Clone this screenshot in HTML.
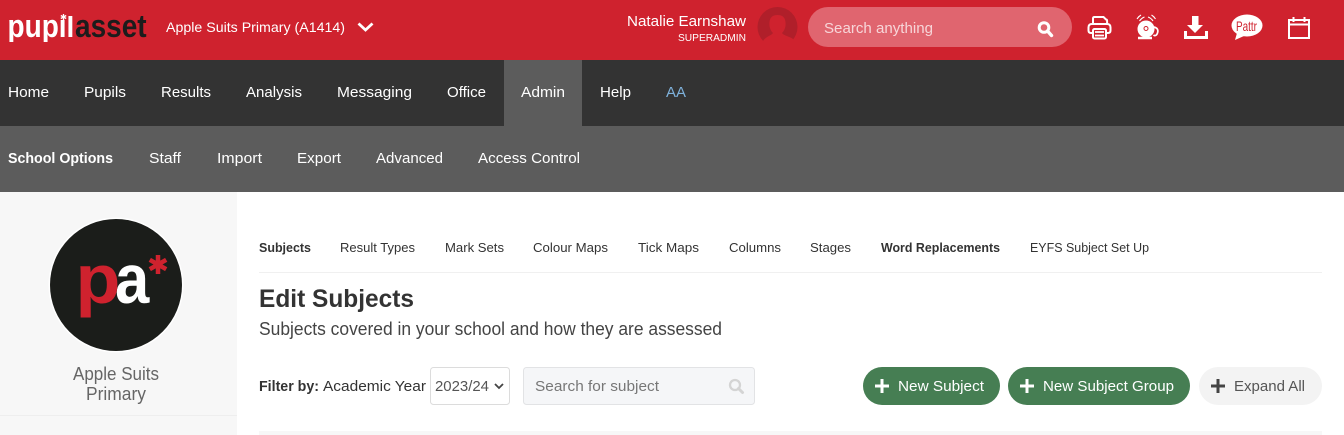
<!DOCTYPE html>
<html lang="en">
<head>
<meta charset="utf-8">
<title>Edit Subjects</title>
<style>
html,body{margin:0;padding:0;width:1344px;height:435px;overflow:hidden;background:#fff}
svg{display:block}
text{font-family:"Liberation Sans",sans-serif}
.n{font-size:15px;fill:#fff}
.t{font-size:12.5px;fill:#333}
.b{font-weight:bold}
</style>
</head>
<body>
<svg width="1344" height="435" viewBox="0 0 1344 435" xmlns="http://www.w3.org/2000/svg">
<defs>
<clipPath id="lg"><rect x="0" y="16" width="160" height="26"/></clipPath>
</defs>
<rect width="1344" height="435" fill="#fff"/>
<!-- header -->
<rect width="1344" height="60" fill="#cf222e"/>
<g clip-path="url(#lg)">
<text transform="translate(7.500 37) scale(1 1.150)" font-size="28" font-weight="bold" fill="#fff">pupil</text>
<text transform="translate(75 37) scale(1 1.150)" font-size="28" font-weight="bold" fill="#1c1c1c">asset</text>
</g>
<rect x="59" y="13" width="9" height="6.500" fill="#cf222e"/>
<path d="M63.500 14v6M60.800 15.500l5.400 3M66.200 15.500l-5.400 3" stroke="#fff" stroke-width="1.300"/>
<text x="166" y="32" font-size="14" fill="#fff" textLength="179" lengthAdjust="spacingAndGlyphs">Apple Suits Primary (A1414)</text>
<path d="M358.500 23.500l7 6.500 7-6.500" fill="none" stroke="#fff" stroke-width="2.800"/>
<text x="627" y="26" font-size="14.500" fill="#fff" textLength="119" lengthAdjust="spacingAndGlyphs">Natalie Earnshaw</text>
<text x="678" y="41" font-size="10.500" fill="#fff" textLength="68" lengthAdjust="spacingAndGlyphs">SUPERADMIN</text>
<!-- avatar -->
<circle cx="777.500" cy="27" r="20" fill="#b01f2a"/>
<path d="M763 41C766 36 771 36 773 33C770 30 769 26 769.500 22C770 17 773 15 777.500 15C782 15 785 17 785.500 22C786 26 785 30 782 33C784 36 789 36 793 39L793 48L763 48z" fill="#cf222e"/>
<!-- search -->
<rect x="808" y="7" width="264" height="40" rx="20" fill="#e0656f"/>
<text x="824" y="33" font-size="15" fill="#f7d5d8" textLength="109" lengthAdjust="spacingAndGlyphs">Search anything</text>
<circle cx="1044" cy="27.500" r="4.800" fill="none" stroke="#fff" stroke-width="3"/>
<path d="M1047.500 31l4 4.500" stroke="#fff" stroke-width="3.400" stroke-linecap="round"/>
<!-- printer -->
<g fill="none" stroke="#fff" stroke-width="2">
<path d="M1093 25v-6.500q0-1.500 1.500-1.500h9l2.500 2.500h.1q1 0 1 1.500v4"/>
<path d="M1093 33h-2q-2.500 0-2.500-2.500v-3q0-3.500 3.500-3.500h15q3.500 0 3.500 3.500v3q0 2.500-2.500 2.500h-2"/>
<rect x="1093" y="29" width="13" height="9.500" rx="1.500"/>
<path d="M1095 32h9M1095 35.500h9" stroke-width="1.700"/>
</g>
<!-- bell -->
<g fill="none" stroke="#fff">
<path d="M1139.500 21q2-3 5-4M1153 21q-2-3-5-4M1137 19q1.500-2.500 4-4M1155.500 19q-1.500-2.500-4-4" stroke-width="1.100"/>
<circle cx="1146" cy="29" r="8.500" fill="#fff" stroke="none"/>
<circle cx="1146" cy="28.500" r="2" stroke="#cf222e" stroke-width="1"/>
<path d="M1154 27c3.500 1 4.500 3 3.500 6s-3 3-4 2" stroke-width="1.700"/>
<path d="M1138 38h14" stroke-width="2.500"/>
</g>
<!-- download -->
<path d="M1192 16h6.500v9h4.500l-8 8-8-8h5z" fill="#fff"/>
<path d="M1185.500 31v6.500h21v-6.500" fill="none" stroke="#fff" stroke-width="3"/>
<!-- pattr -->
<ellipse cx="1247" cy="25.500" rx="15.500" ry="11" fill="#fff"/>
<path d="M1237 33l-2 7 9-4z" fill="#fff"/>
<text x="1236" y="31" font-size="14" fill="#cf222e" textLength="21" lengthAdjust="spacingAndGlyphs">Pattr</text>
<!-- calendar -->
<rect x="1289" y="20" width="20" height="18" fill="none" stroke="#fff" stroke-width="2"/>
<path d="M1289 24.500h20" stroke="#fff" stroke-width="2"/>
<path d="M1293.500 17v5M1304.500 17v5" stroke="#fff" stroke-width="2"/>
<!-- nav -->
<rect y="60" width="1344" height="66" fill="#333"/>
<rect x="504" y="60" width="78" height="66" fill="#5c5c5c"/>
<text class="n" x="8" y="97" textLength="41" lengthAdjust="spacingAndGlyphs">Home</text>
<text class="n" x="84" y="97" textLength="42" lengthAdjust="spacingAndGlyphs">Pupils</text>
<text class="n" x="161" y="97" textLength="50" lengthAdjust="spacingAndGlyphs">Results</text>
<text class="n" x="246" y="97" textLength="56" lengthAdjust="spacingAndGlyphs">Analysis</text>
<text class="n" x="337" y="97" textLength="75" lengthAdjust="spacingAndGlyphs">Messaging</text>
<text class="n" x="447" y="97" textLength="39" lengthAdjust="spacingAndGlyphs">Office</text>
<text class="n" x="521" y="97" textLength="44" lengthAdjust="spacingAndGlyphs">Admin</text>
<text class="n" x="600" y="97" textLength="31" lengthAdjust="spacingAndGlyphs">Help</text>
<text class="n" x="666" y="97" textLength="20" lengthAdjust="spacingAndGlyphs" style="fill:#7fb2dc">AA</text>
<!-- sub nav -->
<rect y="126" width="1344" height="66" fill="#5c5c5c"/>
<text class="n b" x="8" y="163" textLength="105" lengthAdjust="spacingAndGlyphs" style="font-size:14.500px">School Options</text>
<text class="n" x="149" y="163" textLength="32" lengthAdjust="spacingAndGlyphs">Staff</text>
<text class="n" x="217" y="163" textLength="45" lengthAdjust="spacingAndGlyphs">Import</text>
<text class="n" x="297" y="163" textLength="44" lengthAdjust="spacingAndGlyphs">Export</text>
<text class="n" x="376" y="163" textLength="67" lengthAdjust="spacingAndGlyphs">Advanced</text>
<text class="n" x="478" y="163" textLength="102" lengthAdjust="spacingAndGlyphs">Access Control</text>
<!-- sidebar -->
<rect y="192" width="237" height="243" fill="#f7f7f7"/>
<rect y="415" width="237" height="1" fill="#eeeeee"/>
<circle cx="116" cy="285" r="67.500" fill="#fff"/>
<circle cx="116" cy="285" r="66" fill="#1b1d1a"/>
<text transform="translate(115 303) scale(.88 1)" font-size="70" font-weight="bold" fill="#fff">a</text>
<text transform="translate(75.500 303) scale(1.050 1)" font-size="70" font-weight="bold" fill="#cf222e">p</text>
<path d="M158 255v19M149.800 259.800l16.400 9.400M166.200 259.800l-16.400 9.400" stroke="#cf222e" stroke-width="4.500"/>
<text x="73" y="380" font-size="18" fill="#666" textLength="86" lengthAdjust="spacingAndGlyphs">Apple Suits</text>
<text x="86" y="400" font-size="18" fill="#666" textLength="60" lengthAdjust="spacingAndGlyphs">Primary</text>
<!-- tabs -->
<text class="t b" x="259" y="252" textLength="52" lengthAdjust="spacingAndGlyphs">Subjects</text>
<text class="t" x="340" y="252" textLength="75" lengthAdjust="spacingAndGlyphs">Result Types</text>
<text class="t" x="445" y="252" textLength="59" lengthAdjust="spacingAndGlyphs">Mark Sets</text>
<text class="t" x="533" y="252" textLength="75" lengthAdjust="spacingAndGlyphs">Colour Maps</text>
<text class="t" x="638" y="252" textLength="61" lengthAdjust="spacingAndGlyphs">Tick Maps</text>
<text class="t" x="729" y="252" textLength="52" lengthAdjust="spacingAndGlyphs">Columns</text>
<text class="t" x="810" y="252" textLength="41" lengthAdjust="spacingAndGlyphs">Stages</text>
<text class="t b" x="881" y="252" textLength="119" lengthAdjust="spacingAndGlyphs">Word Replacements</text>
<text class="t" x="1030" y="252" textLength="119" lengthAdjust="spacingAndGlyphs">EYFS Subject Set Up</text>
<rect x="259" y="272" width="1063" height="1" fill="#f0f0f0"/>
<!-- headings -->
<text x="259" y="307" font-size="25" font-weight="bold" fill="#333" textLength="155" lengthAdjust="spacingAndGlyphs">Edit Subjects</text>
<text x="259" y="335" font-size="18" fill="#444" textLength="463" lengthAdjust="spacingAndGlyphs">Subjects covered in your school and how they are assessed</text>
<!-- filter -->
<text x="259" y="391" font-size="14.500" font-weight="bold" fill="#333" textLength="60" lengthAdjust="spacingAndGlyphs">Filter by:</text>
<text x="323" y="391" font-size="14.500" fill="#333" textLength="103" lengthAdjust="spacingAndGlyphs">Academic Year</text>
<rect x="430.500" y="367.500" width="79" height="37" rx="3" fill="#fff" stroke="#dcdcdc"/>
<text x="435" y="391" font-size="14.500" fill="#555" textLength="54" lengthAdjust="spacingAndGlyphs">2023/24</text>
<path d="M495 384l4 4 4-4" fill="none" stroke="#444" stroke-width="1.800"/>
<rect x="523.500" y="367.500" width="231" height="37" rx="3" fill="#f5f6f8" stroke="#e2e3e5"/>
<text x="535" y="391" font-size="14.500" fill="#777" textLength="124" lengthAdjust="spacingAndGlyphs">Search for subject</text>
<circle cx="735" cy="385" r="5" fill="none" stroke="#d4d4d4" stroke-width="2.300"/>
<path d="M738.500 388.500l4 4" stroke="#d4d4d4" stroke-width="3" stroke-linecap="round"/>
<!-- buttons -->
<rect x="863" y="367" width="137" height="38" rx="19" fill="#467e53"/>
<path d="M882 379v14M875 386h14" stroke="#fff" stroke-width="3"/>
<text x="898" y="391" font-size="14.500" fill="#fff" textLength="86" lengthAdjust="spacingAndGlyphs">New Subject</text>
<rect x="1008" y="367" width="182" height="38" rx="19" fill="#467e53"/>
<path d="M1027 379v14M1020 386h14" stroke="#fff" stroke-width="3"/>
<text x="1043" y="391" font-size="14.500" fill="#fff" textLength="131" lengthAdjust="spacingAndGlyphs">New Subject Group</text>
<rect x="1199" y="367" width="123" height="38" rx="19" fill="#f3f3f3"/>
<path d="M1218 379v14M1211 386h14" stroke="#444" stroke-width="3"/>
<text x="1234" y="391" font-size="14.500" fill="#555" textLength="71" lengthAdjust="spacingAndGlyphs">Expand All</text>
<!-- next panel -->
<rect x="259" y="431" width="1063" height="4" fill="#f7f7f7"/>
</svg>
</body>
</html>
